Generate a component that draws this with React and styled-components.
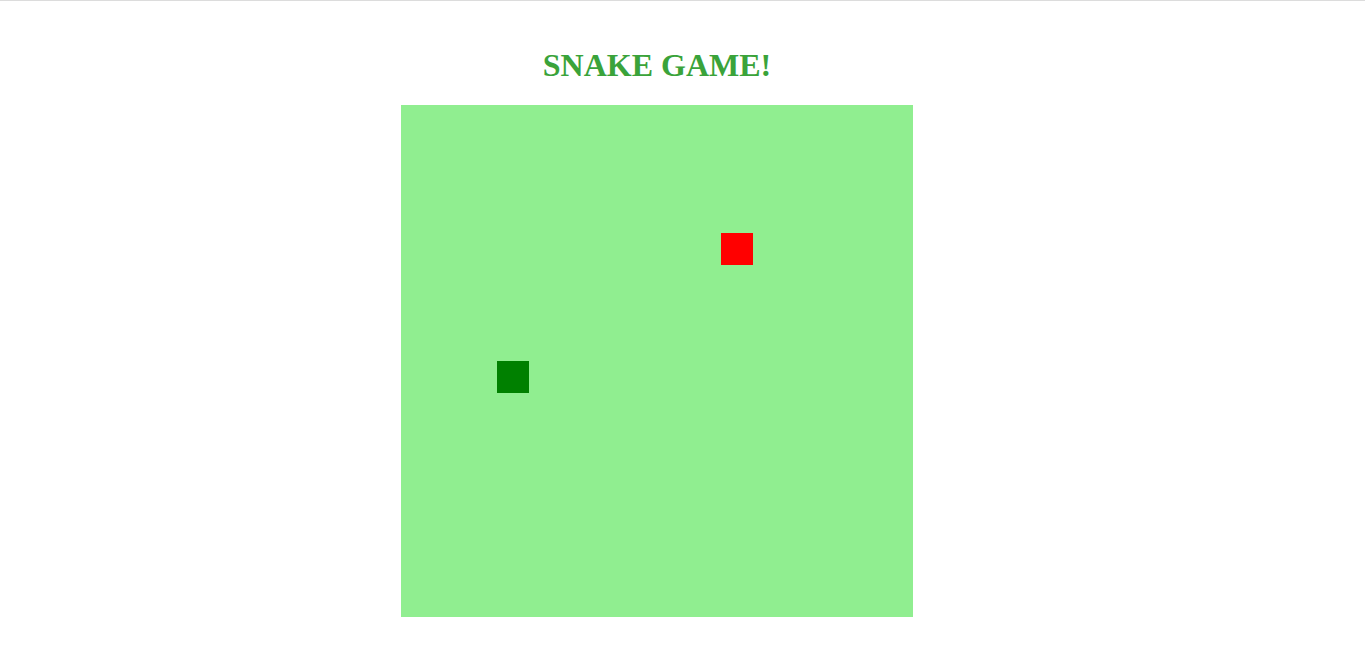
import styled, { createGlobalStyle } from "styled-components"

const GlobalStyle = createGlobalStyle`
  html, body {
    margin: 0;
    padding: 0;
    background: #fff;
  }
`

const BOARD_SIZE = 16
const CELL = 32

const snake = [{ x: 3, y: 8 }]
const food = { x: 10, y: 4 }

const App = () => {
  return (
    <>
      <GlobalStyle />
      <Page>
        <Title>SNAKE GAME!</Title>
        <Board>
          {snake.map((part, i) => (
            <Cell key={i} $x={part.x} $y={part.y} $color="#008000" />
          ))}
          <Cell $x={food.x} $y={food.y} $color="#ff0000" />
        </Board>
      </Page>
    </>
  )
}

const Page = styled.main`
  border-top: 1px solid #dcdcdc;
  min-height: 653px;
  display: flex;
  flex-direction: column;
  align-items: center;
  padding: 46px 51px 0 0;
  box-sizing: border-box;
`

const Title = styled.h1`
  margin: 0 0 21px;
  font-family: "Liberation Serif", "Times New Roman", serif;
  font-size: 32px;
  line-height: 37px;
  font-weight: bold;
  color: #3aa33a;
`

const Board = styled.div`
  display: grid;
  grid-template-columns: repeat(${BOARD_SIZE}, ${CELL}px);
  grid-template-rows: repeat(${BOARD_SIZE}, ${CELL}px);
  background: #90ee90;
`

const Cell = styled.div`
  grid-column: ${(p) => p.$x + 1};
  grid-row: ${(p) => p.$y + 1};
  background: ${(p) => p.$color};
`

export default App
